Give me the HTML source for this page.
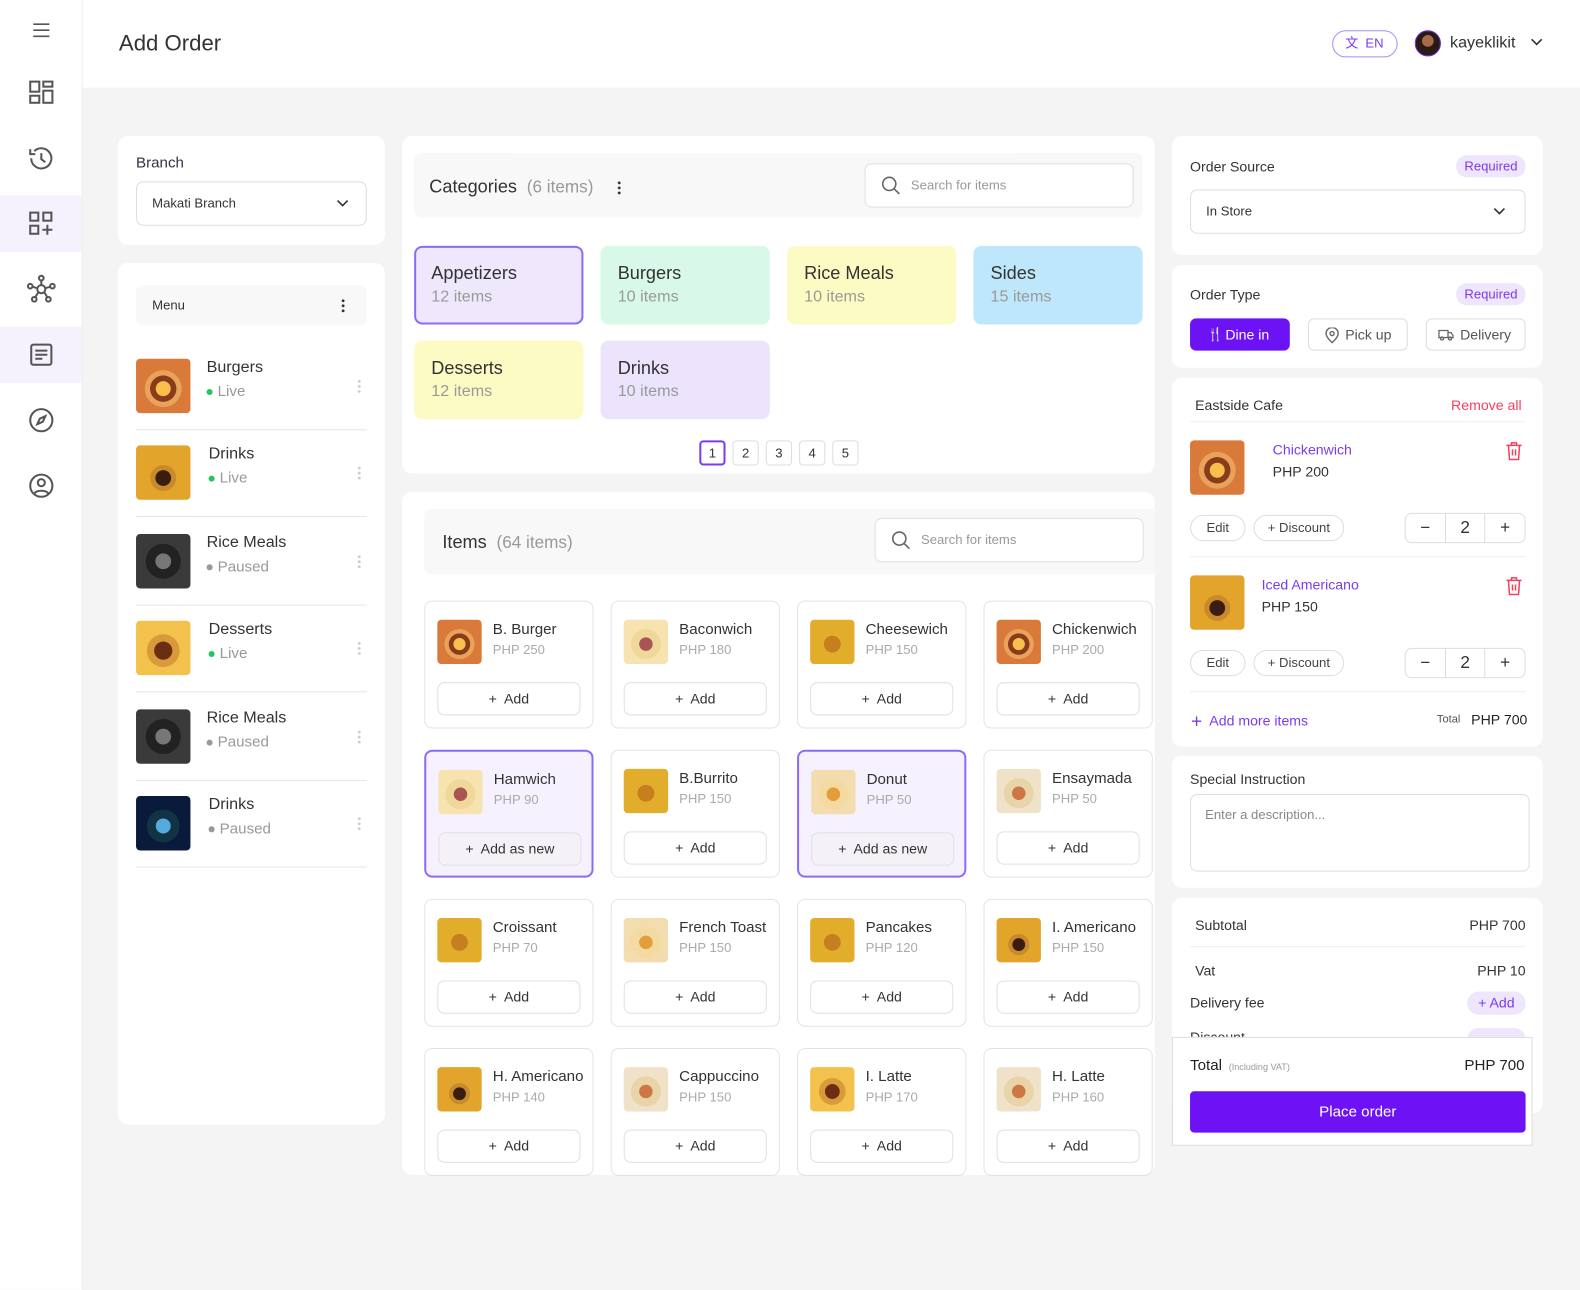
<!DOCTYPE html>
<html><head><meta charset="utf-8"><style>
*{box-sizing:border-box;margin:0;padding:0}
body{width:1580px;height:1280px;background:#f4f4f5;font-family:"Liberation Sans",sans-serif;color:#333;position:relative;overflow:hidden}
#w{position:absolute;left:0;top:0;width:1568px;height:1271px;transform:scale(1.00766);transform-origin:0 0}
.a{position:absolute}
.card{position:absolute;background:#fff;border-radius:10px}
.side{position:absolute;left:0;top:0;width:82px;height:1280px;background:#fff;border-right:1px solid #ececec}
.ico{position:absolute;left:25px;width:32px;height:32px}
.hdr{position:absolute;left:82px;top:0;width:1498px;height:87px;background:#fff}
.img{position:absolute;border-radius:4px}
.i1{background:radial-gradient(circle at 50% 55%,#f7c04a 0 18%,#8a3b1c 19% 32%,#e8a25a 33% 45%,#d9793a 46%)}
.i2{background:radial-gradient(circle at 50% 60%,#3a1d0e 0 18%,#c98a2c 19% 30%,#e2a42a 31%)}
.i3{background:radial-gradient(circle at 50% 50%,#777 0 20%,#222 21% 45%,#3a3a3a 46%)}
.i4{background:radial-gradient(circle at 50% 55%,#6b2d12 0 22%,#d99b3a 23% 40%,#f2c24d 41%)}
.i5{background:radial-gradient(circle at 50% 55%,#5ad 0 18%,#134 19% 40%,#0a1a3a 41%)}
.i6{background:radial-gradient(circle at 50% 55%,#c74 0 20%,#e9d3a8 21% 45%,#efe2c8 46%)}
.i7{background:radial-gradient(circle at 50% 55%,#a55 0 20%,#f0d79a 21% 45%,#f6e3b0 46%)}
.i8{background:radial-gradient(circle at 50% 55%,#c57f1f 0 25%,#e3ad2c 26%)}
.i9{background:radial-gradient(circle at 50% 55%,#e29e3a 0 20%,#f4d9a0 21% 45%,#f3dcae 46%)}
.menu-row{position:absolute;left:135px;width:229px;height:86px;border-bottom:1px solid #e6e6e6}
.menu-row .img{left:0;top:15px;width:54px;height:54px}
.menu-row .n{position:absolute;left:70px;top:15px;font-size:16px;color:#333}
.menu-row .s{position:absolute;left:70px;top:39px;font-size:15px;color:#999}
.dot{display:inline-block;width:6px;height:6px;border-radius:50%;margin-right:5px;vertical-align:middle}
.kebab{position:absolute;right:6px;top:35px;width:3px;height:14px;background:radial-gradient(circle,#ccc 1.3px,transparent 1.5px) 0 0/3px 5px}
.cat{position:absolute;width:168px;height:78px;border-radius:8px;padding:17px 17px}
.cat b{display:block;font-weight:normal;font-size:18px;color:#333}
.cat span{display:block;font-size:16px;color:#999;margin-top:4px}
.pg{position:absolute;top:437px;width:26px;height:25px;border:1px solid #ddd;border-radius:4px;font-size:13px;text-align:center;line-height:23px;color:#333;background:#fff}
.it{position:absolute;width:168px;height:127px;border:1.5px solid #e3e3e3;border-radius:8px;background:#fff}
.it.sel{border:2px solid #8b6cf7;background:#f5f1ff}
.it .img{left:12px;top:18px;width:44px;height:44px}
.it .n{position:absolute;left:67px;top:19px;font-size:15px;color:#333;white-space:nowrap}
.it .p{position:absolute;left:67px;top:40px;font-size:13px;color:#aaa}
.it .btn{position:absolute;left:12px;top:80px;width:142px;height:33px;border:1px solid #e0e0e0;border-radius:7px;background:#fff;text-align:center;line-height:31px;font-size:14px;color:#333}
.it.sel .btn{background:#f4f2f7}
.search{position:absolute;height:44px;border:1px solid #e0e0e0;border-radius:7px;background:#fff;font-size:13px;color:#999;line-height:42px;padding-left:45px}
.search svg{position:absolute;left:15px;top:11px}
.req{position:absolute;right:17px;height:22px;padding:0 8px;border-radius:11px;background:#eee6fd;color:#7c3aed;font-size:13px;line-height:22px}
.lbl{position:absolute;font-size:14px;color:#333}
.pill{position:absolute;height:26px;border:1px solid #ddd;border-radius:13px;font-size:13px;color:#444;line-height:24px;text-align:center}
.qty{position:absolute;left:1394px;width:120px;height:30px;border:1px solid #ddd;border-radius:7px;display:flex}
.qty div{flex:1;text-align:center;line-height:28px;font-size:17px;color:#333}
.qty div+div{border-left:1px solid #ddd}
.trash{position:absolute;left:1494px}
</style></head><body><div id="w">

<div class="side">
<svg class="ico" style="top:14px" viewBox="0 0 32 32" fill="none" stroke="#555" stroke-width="1.6"><path d="M8 10h16M8 16h16M8 22h16"/></svg>
<svg class="ico" style="top:76px" viewBox="0 0 32 32" fill="none" stroke="#555" stroke-width="2"><rect x="5" y="5" width="9" height="10"/><rect x="18" y="5" width="9" height="5"/><rect x="5" y="19" width="9" height="7"/><rect x="18" y="14" width="9" height="12"/></svg>
<svg class="ico" style="top:141px" viewBox="0 0 32 32" fill="none" stroke="#555" stroke-width="2"><path d="M6 16a10 10 0 1 0 3-7"/><path d="M5 7v5h5"/><path d="M16 11v6l4 3"/></svg>
<div class="a" style="left:0;top:194px;width:81px;height:56px;background:#f5f1fd"></div>
<svg class="ico" style="top:206px" viewBox="0 0 32 32" fill="none" stroke="#555" stroke-width="2"><rect x="5" y="5" width="8" height="8"/><rect x="18" y="5" width="8" height="8"/><rect x="5" y="18" width="8" height="8"/><path d="M22 17v10M17 22h10"/></svg>
<svg class="ico" style="top:271px" viewBox="0 0 32 32" fill="none" stroke="#555" stroke-width="2"><circle cx="16" cy="16" r="4"/><circle cx="16" cy="5" r="2.3"/><circle cx="5" cy="13" r="2.3"/><circle cx="27" cy="13" r="2.3"/><circle cx="9" cy="26" r="2.3"/><circle cx="23" cy="26" r="2.3"/><path d="M16 7v5M7 13.5l5 1.5M25 13.5l-5 1.5M10 24l3-5M22 24l-3-5"/></svg>
<div class="a" style="left:0;top:324px;width:81px;height:56px;background:#f5f1fd"></div>
<svg class="ico" style="top:336px" viewBox="0 0 32 32" fill="none" stroke="#555" stroke-width="2"><rect x="6" y="6" width="20" height="20" rx="2"/><path d="M10 12h12M10 16h12M10 20h7"/></svg>
<svg class="ico" style="top:401px" viewBox="0 0 32 32" fill="none" stroke="#555" stroke-width="2"><circle cx="16" cy="16" r="11"/><path d="M20 12l-2.5 5.5L12 20l2.5-5.5z"/></svg>
<svg class="ico" style="top:466px" viewBox="0 0 32 32" fill="none" stroke="#555" stroke-width="2"><circle cx="16" cy="16" r="11"/><circle cx="16" cy="13" r="3.5"/><path d="M9 24c2-4 12-4 14 0"/></svg>
</div>

<div class="hdr">
<div class="a" style="left:36px;top:30px;font-size:22px;color:#333">Add Order</div>
<div class="a" style="left:1240px;top:30px;width:65px;height:27px;border:1.5px solid #a98bf5;border-radius:14px;color:#7c3aed;font-size:13px;line-height:24px;padding-left:32px">EN<span style="position:absolute;left:12px;top:0;font-size:13px">文</span></div>
<div class="a" style="left:1322px;top:30px;width:26px;height:26px;border-radius:50%;background:radial-gradient(circle at 50% 40%,#a86b4a 0 30%,#2a1a14 32%);border:1.5px solid #6d28d9"></div>
<div class="a" style="left:1357px;top:34px;font-size:16px;color:#333">kayeklikit</div>
<svg class="a" style="left:1436px;top:37px" width="14" height="10" viewBox="0 0 14 10" fill="none" stroke="#333" stroke-width="1.6"><path d="M2 2l5 5 5-5"/></svg>
</div>

<div class="card" style="left:117px;top:135px;width:265px;height:108px">
<div class="a" style="left:18px;top:18px;font-size:15px;color:#334">Branch</div>
<div class="a" style="left:18px;top:45px;width:229px;height:44px;border:1px solid #ddd;border-radius:7px;font-size:13px;line-height:42px;padding-left:15px;color:#333">Makati Branch
<svg class="a" style="right:16px;top:16px" width="14" height="10" viewBox="0 0 14 10" fill="none" stroke="#333" stroke-width="1.6"><path d="M2 2l5 5 5-5"/></svg></div>
</div>

<div class="card" style="left:117px;top:261px;width:265px;height:855px"></div>
<div class="a" style="left:135px;top:283px;width:229px;height:40px;background:#f8f8f8;border-radius:7px;font-size:13px;line-height:40px;padding-left:16px;color:#333">Menu<div class="a" style="right:22px;top:13px;width:3px;height:14px;background:radial-gradient(circle,#333 1.3px,transparent 1.5px) 0 0/3px 5px"></div></div>
<div class="menu-row" style="top:341px"><div class="img i1"></div><div class="n">Burgers</div><div class="s"><span class="dot" style="background:#22c55e"></span>Live</div><div class="kebab"></div></div>
<div class="menu-row" style="top:427px"><div class="img i2"></div><div class="n" style="left:72px">Drinks</div><div class="s" style="left:72px"><span class="dot" style="background:#22c55e"></span>Live</div><div class="kebab"></div></div>
<div class="menu-row" style="top:515px"><div class="img i3"></div><div class="n">Rice Meals</div><div class="s"><span class="dot" style="background:#999"></span>Paused</div><div class="kebab"></div></div>
<div class="menu-row" style="top:601px"><div class="img i4"></div><div class="n" style="left:72px">Desserts</div><div class="s" style="left:72px"><span class="dot" style="background:#22c55e"></span>Live</div><div class="kebab"></div></div>
<div class="menu-row" style="top:689px"><div class="img i3"></div><div class="n">Rice Meals</div><div class="s"><span class="dot" style="background:#999"></span>Paused</div><div class="kebab"></div></div>
<div class="menu-row" style="top:775px"><div class="img i5"></div><div class="n" style="left:72px">Drinks</div><div class="s" style="left:72px"><span class="dot" style="background:#999"></span>Paused</div><div class="kebab"></div></div>

<div class="card" style="left:399px;top:135px;width:747px;height:335px"></div>
<div class="a" style="left:411px;top:152px;width:723px;height:64px;background:#f8f8f8;border-radius:7px"></div>
<div class="a" style="left:426px;top:175px;font-size:18px;color:#333">Categories <span style="color:#999;font-size:17px">&nbsp;(6 items)</span></div>
<div class="a" style="left:613px;top:179px;width:3px;height:14px;background:radial-gradient(circle,#333 1.3px,transparent 1.5px) 0 0/3px 5px"></div>
<div class="search" style="left:858px;top:162px;width:267px">Search for items<svg width="20" height="20" viewBox="0 0 20 20" fill="none" stroke="#666" stroke-width="1.6"><circle cx="8.5" cy="8.5" r="6.5"/><path d="M13.5 13.5l5 5"/></svg></div>
<div class="cat" style="left:411px;top:244px;background:#efe8fd;border:2.5px solid #8b6cf7;padding:15px"><b>Appetizers</b><span>12 items</span></div>
<div class="cat" style="left:596px;top:244px;background:#d8f8e8"><b>Burgers</b><span>10 items</span></div>
<div class="cat" style="left:781px;top:244px;background:#fdfbc4"><b>Rice Meals</b><span>10 items</span></div>
<div class="cat" style="left:966px;top:244px;background:#bfe7fb"><b>Sides</b><span>15 items</span></div>
<div class="cat" style="left:411px;top:338px;background:#fdfbc4"><b>Desserts</b><span>12 items</span></div>
<div class="cat" style="left:596px;top:338px;background:#ece4fc"><b>Drinks</b><span>10 items</span></div>
<div class="pg" style="left:694px;border:2px solid #7c3aed;line-height:21px">1</div>
<div class="pg" style="left:727px">2</div>
<div class="pg" style="left:760px">3</div>
<div class="pg" style="left:793px">4</div>
<div class="pg" style="left:826px">5</div>

<div class="card" style="left:399px;top:488px;width:747px;height:678px"></div>
<div class="a" style="left:421px;top:505px;width:725px;height:65px;background:#f8f8f8;border-radius:7px 0 0 7px"></div>
<div class="a" style="left:439px;top:528px;font-size:18px;color:#333">Items <span style="color:#999;font-size:17px">&nbsp;(64 items)</span></div>
<div class="search" style="left:868px;top:514px;width:267px">Search for items<svg width="20" height="20" viewBox="0 0 20 20" fill="none" stroke="#666" stroke-width="1.6"><circle cx="8.5" cy="8.5" r="6.5"/><path d="M13.5 13.5l5 5"/></svg></div>

<div class="it" style="left:421px;top:596px"><div class="img i1"></div><div class="n">B. Burger</div><div class="p">PHP 250</div><div class="btn">+&nbsp; Add</div></div>
<div class="it" style="left:606px;top:596px"><div class="img i7"></div><div class="n">Baconwich</div><div class="p">PHP 180</div><div class="btn">+&nbsp; Add</div></div>
<div class="it" style="left:791px;top:596px"><div class="img i8"></div><div class="n">Cheesewich</div><div class="p">PHP 150</div><div class="btn">+&nbsp; Add</div></div>
<div class="it" style="left:976px;top:596px"><div class="img i1"></div><div class="n">Chickenwich</div><div class="p">PHP 200</div><div class="btn">+&nbsp; Add</div></div>

<div class="it sel" style="left:421px;top:744px"><div class="img i7"></div><div class="n">Hamwich</div><div class="p">PHP 90</div><div class="btn">+&nbsp; Add as new</div></div>
<div class="it" style="left:606px;top:744px"><div class="img i8"></div><div class="n">B.Burrito</div><div class="p">PHP 150</div><div class="btn">+&nbsp; Add</div></div>
<div class="it sel" style="left:791px;top:744px"><div class="img i9"></div><div class="n">Donut</div><div class="p">PHP 50</div><div class="btn">+&nbsp; Add as new</div></div>
<div class="it" style="left:976px;top:744px"><div class="img i6"></div><div class="n">Ensaymada</div><div class="p">PHP 50</div><div class="btn">+&nbsp; Add</div></div>

<div class="it" style="left:421px;top:892px"><div class="img i8"></div><div class="n">Croissant</div><div class="p">PHP 70</div><div class="btn">+&nbsp; Add</div></div>
<div class="it" style="left:606px;top:892px"><div class="img i9"></div><div class="n">French Toast</div><div class="p">PHP 150</div><div class="btn">+&nbsp; Add</div></div>
<div class="it" style="left:791px;top:892px"><div class="img i8"></div><div class="n">Pancakes</div><div class="p">PHP 120</div><div class="btn">+&nbsp; Add</div></div>
<div class="it" style="left:976px;top:892px"><div class="img i2"></div><div class="n">I. Americano</div><div class="p">PHP 150</div><div class="btn">+&nbsp; Add</div></div>

<div class="it" style="left:421px;top:1040px"><div class="img i2"></div><div class="n">H. Americano</div><div class="p">PHP 140</div><div class="btn">+&nbsp; Add</div></div>
<div class="it" style="left:606px;top:1040px"><div class="img i6"></div><div class="n">Cappuccino</div><div class="p">PHP 150</div><div class="btn">+&nbsp; Add</div></div>
<div class="it" style="left:791px;top:1040px"><div class="img i4"></div><div class="n">I. Latte</div><div class="p">PHP 170</div><div class="btn">+&nbsp; Add</div></div>
<div class="it" style="left:976px;top:1040px"><div class="img i6"></div><div class="n">H. Latte</div><div class="p">PHP 160</div><div class="btn">+&nbsp; Add</div></div>

<div class="card" style="left:1163px;top:135px;width:368px;height:118px">
<div class="lbl" style="left:18px;top:22px">Order Source</div><div class="req" style="top:19px">Required</div>
<div class="a" style="left:18px;top:53px;width:333px;height:44px;border:1px solid #ddd;border-radius:7px;font-size:13px;line-height:42px;padding-left:15px;color:#333">In Store
<svg class="a" style="right:18px;top:16px" width="14" height="10" viewBox="0 0 14 10" fill="none" stroke="#333" stroke-width="1.6"><path d="M2 2l5 5 5-5"/></svg></div>
</div>
<div class="card" style="left:1163px;top:263px;width:368px;height:102px">
<div class="lbl" style="left:18px;top:21px">Order Type</div><div class="req" style="top:18px">Required</div>
<div class="a" style="left:18px;top:53px;width:99px;height:32px;background:#6d12f5;border-radius:6px;color:#fff;font-size:14px;line-height:32px;padding-left:35px">Dine in<span style="position:absolute;left:17px;font-size:13px">🍴</span></div>
<div class="a" style="left:135px;top:53px;width:99px;height:32px;border:1px solid #ddd;border-radius:6px;color:#555;font-size:14px;line-height:30px;padding-left:36px">Pick up<svg class="a" style="left:16px;top:8px" width="14" height="16" viewBox="0 0 14 16" fill="none" stroke="#666" stroke-width="1.4"><path d="M7 15s-6-5-6-9a6 6 0 0 1 12 0c0 4-6 9-6 9z"/><circle cx="7" cy="6" r="2"/></svg></div>
<div class="a" style="left:252px;top:53px;width:99px;height:32px;border:1px solid #ddd;border-radius:6px;color:#555;font-size:14px;line-height:30px;padding-left:33px">Delivery<svg class="a" style="left:11px;top:9px" width="16" height="12" viewBox="0 0 16 12" fill="none" stroke="#666" stroke-width="1.3"><path d="M1 2h9v7H1zM10 4h3l2 3v2h-5"/><circle cx="4" cy="10" r="1.5"/><circle cx="12" cy="10" r="1.5"/></svg></div>
</div>

<div class="card" style="left:1163px;top:375px;width:368px;height:366px"></div>
<div class="lbl" style="left:1186px;top:394px">Eastside Cafe</div>
<div class="a" style="left:1440px;top:394px;font-size:14px;color:#f43f5e">Remove all</div>
<div class="a" style="left:1181px;top:418px;width:333px;height:1px;background:#eee"></div>
<div class="img i1" style="left:1181px;top:437px;width:54px;height:54px"></div>
<div class="a" style="left:1263px;top:438px;font-size:14px;color:#7c3aed">Chickenwich</div>
<div class="a" style="left:1263px;top:460px;font-size:14px;color:#333">PHP 200</div>
<svg class="trash" style="top:438px" width="17" height="19" viewBox="0 0 17 19" fill="none" stroke="#f43f5e" stroke-width="1.5"><path d="M1 4h15M6 4V1.5h5V4M3 4l1 14h9l1-14M7 8v6M10 8v6"/></svg>
<div class="pill" style="left:1181px;top:511px;width:55px">Edit</div>
<div class="pill" style="left:1244px;top:511px;width:90px">+ Discount</div>
<div class="qty" style="top:509px"><div>−</div><div>2</div><div>+</div></div>
<div class="a" style="left:1181px;top:552px;width:333px;height:1px;background:#eee"></div>
<div class="img i2" style="left:1181px;top:571px;width:54px;height:54px"></div>
<div class="a" style="left:1252px;top:572px;font-size:14px;color:#7c3aed">Iced Americano</div>
<div class="a" style="left:1252px;top:594px;font-size:14px;color:#333">PHP 150</div>
<svg class="trash" style="top:572px" width="17" height="19" viewBox="0 0 17 19" fill="none" stroke="#f43f5e" stroke-width="1.5"><path d="M1 4h15M6 4V1.5h5V4M3 4l1 14h9l1-14M7 8v6M10 8v6"/></svg>
<div class="pill" style="left:1181px;top:645px;width:55px">Edit</div>
<div class="pill" style="left:1244px;top:645px;width:90px">+ Discount</div>
<div class="qty" style="top:643px"><div>−</div><div>2</div><div>+</div></div>
<div class="a" style="left:1181px;top:686px;width:333px;height:1px;background:#eee"></div>
<div class="a" style="left:1182px;top:706px;font-size:14px;color:#7c3aed"><span style="font-size:19px;vertical-align:-2px">+</span>&nbsp; Add more items</div>
<div class="a" style="left:1426px;top:708px;font-size:11px;color:#555">Total</div>
<div class="a" style="left:1460px;top:706px;font-size:14px;color:#222">PHP 700</div>

<div class="card" style="left:1163px;top:750px;width:368px;height:131px">
<div class="lbl" style="left:18px;top:15px">Special Instruction</div>
<div class="a" style="left:18px;top:38px;width:337px;height:77px;border:1px solid #ddd;border-radius:7px;font-size:13px;color:#888;padding:12px 14px">Enter a description...</div>
</div>

<div class="card" style="left:1163px;top:891px;width:368px;height:214px">
<div class="lbl" style="left:23px;top:19px">Subtotal</div><div class="a" style="right:17px;top:19px;font-size:14px">PHP 700</div>
<div class="a" style="left:18px;top:48px;width:333px;height:1px;background:#eee"></div>
<div class="lbl" style="left:23px;top:64px">Vat</div><div class="a" style="right:17px;top:64px;font-size:14px">PHP 10</div>
<div class="lbl" style="left:18px;top:96px">Delivery fee</div>
<div class="a" style="right:17px;top:93px;width:58px;height:23px;border-radius:12px;background:#eee6fd;color:#7c3aed;font-size:14px;line-height:23px;text-align:center">+ Add</div>
<div class="lbl" style="left:18px;top:130px">Discount</div>
<div class="a" style="right:17px;top:129px;width:58px;height:23px;border-radius:12px;background:#eee6fd"></div>
</div>
<div class="a" style="left:1163px;top:1029px;width:358px;height:108px;background:#fff;border:1px solid #ddd">
<div class="a" style="left:17px;top:19px;font-size:15px;color:#222">Total <span style="font-size:9px;color:#999">&nbsp;(Including VAT)</span></div>
<div class="a" style="right:7px;top:19px;font-size:15px;color:#222">PHP 700</div>
<div class="a" style="left:17px;top:53px;width:333px;height:41px;background:#6d12f5;border-radius:4px;color:#fff;font-size:15px;text-align:center;line-height:41px">Place order</div>
</div>
</div></body></html>
